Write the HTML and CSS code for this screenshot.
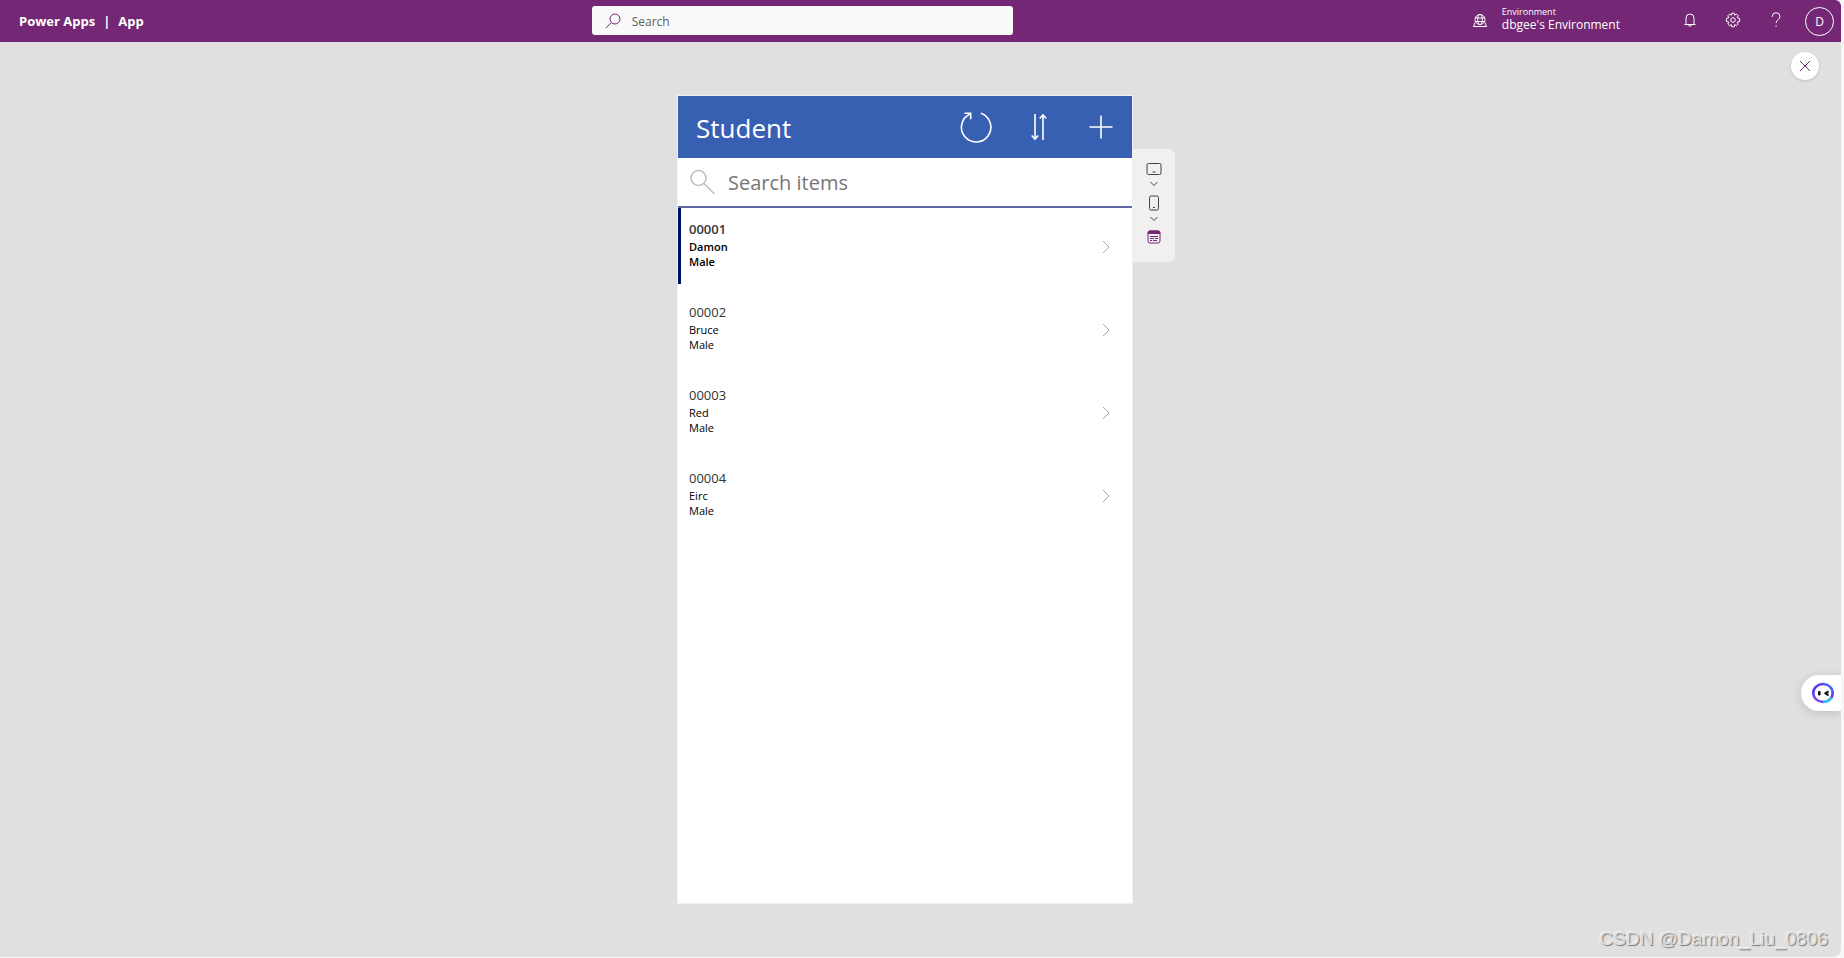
FILE: index.html
```
<!DOCTYPE html>
<html lang="en">
<head>
    <meta charset="UTF-8">
    <meta name="viewport" content="width=device-width, initial-scale=1.0">
    <title>Power Apps | App</title>
    <link rel="stylesheet" href="styles.css">
</head>
<body>
    <div class="window">
        <!-- Top bar -->
        <header class="topbar">
            <div class="brand">
                <a href="#">Power Apps</a>
                <span>|</span>
                <a href="#">App</a>
            </div>
            <div class="top-search">
                <svg width="16" height="16" viewBox="0 0 16 16"><circle cx="10" cy="6" r="5"/><path d="M6.4 9.6L.8 15"/></svg>
                <input type="text" aria-label="Search" placeholder="Search">
            </div>
            <div class="top-actions">
                <button class="environment">
                    <svg width="16" height="16" viewBox="0 0 16 16"><circle cx="8" cy="6.5" r="5"/><ellipse cx="8" cy="6.5" rx="2.3" ry="5"/><path d="M3 5h10M3 8.500h10M3 9.500L1.500 13.500h13L13 9.500"/></svg>
                    <span class="environment-text">
                        <small>Environment</small>
                        <span>dbgee's Environment</span>
                    </span>
                </button>
                <button class="icon-button" aria-label="Notifications">
                    <svg width="16" height="16" viewBox="0 0 16 16"><path d="M2.5 12.5h11M4 12.5V6a4 4 0 0 1 8 0v6.5M6.5 12.5a1.500 1.700 0 0 0 3 0"/></svg>
                </button>
                <button class="icon-button" aria-label="Settings">
                    <svg width="16" height="16" viewBox="0 0 16 16"><circle cx="8" cy="8" r="2.3"/><path d="M6.800 1.200h2.400l.5 2 1.800-1.100 1.700 1.700-1.100 1.800 2.500.8v3l-2.500.8 1.100 1.800-1.700 1.700-1.800-1.100-.5 2.200H6.800l-.5-2.200-1.800 1.100L2.800 12l1.100-1.800-2.500-.8v-3l2.500-.8-1.100-1.800 1.700-1.700 1.800 1.100z"/></svg>
                </button>
                <button class="icon-button" aria-label="Help">
                    <svg width="16" height="16" viewBox="0 0 16 16"><path d="M4.300 5V4.500a3.800 3.800 0 0 1 7.600 0c0 3-3.800 3.500-3.800 6.500M8.100 13.300v1.500"/></svg>
                </button>
                <button class="avatar">D</button>
            </div>
        </header>

        <!-- App preview -->
        <main class="stage">
            <section class="phone">
                <div class="app-header">
                    <h1>Student</h1>
                    <button aria-label="Refresh">
                        <svg width="34" height="34" viewBox="0 0 34 34"><path d="M20.800 3.300a14.700 14.700 0 1 1-10.800.6"/><path d="M4.500 3.300h6.200v6"/></svg>
                    </button>
                    <button aria-label="Sort">
                        <svg width="34" height="34" viewBox="0 0 34 34"><path d="M13 4v24M9.700 25.500L13 29l3.300-3.500M21 30V6M17.700 8.500L21 5l3.300 3.500"/></svg>
                    </button>
                    <button aria-label="New item">
                        <svg width="34" height="34" viewBox="0 0 34 34"><path d="M17 5.500v23M5.500 17h23"/></svg>
                    </button>
                </div>
                <div class="app-search">
                    <svg width="26" height="26" viewBox="0 0 26 26"><circle cx="8.500" cy="9" r="7.500"/><path d="M14 14.500l10.500 10.500"/></svg>
                    <input type="text" aria-label="Search items" placeholder="Search items">
                </div>
                <ul class="gallery">
                    <li class="selected">
                        <div>
                            <h2>00001</h2>
                            <p>Damon</p>
                            <p>Male</p>
                        </div>
                        <button aria-label="Open 00001"><svg width="8" height="14" viewBox="0 0 8 14"><path d="M1 1l6 6-6 6"/></svg></button>
                    </li>
                    <li>
                        <div>
                            <h2>00002</h2>
                            <p>Bruce</p>
                            <p>Male</p>
                        </div>
                        <button aria-label="Open 00002"><svg width="8" height="14" viewBox="0 0 8 14"><path d="M1 1l6 6-6 6"/></svg></button>
                    </li>
                    <li>
                        <div>
                            <h2>00003</h2>
                            <p>Red</p>
                            <p>Male</p>
                        </div>
                        <button aria-label="Open 00003"><svg width="8" height="14" viewBox="0 0 8 14"><path d="M1 1l6 6-6 6"/></svg></button>
                    </li>
                    <li>
                        <div>
                            <h2>00004</h2>
                            <p>Eirc</p>
                            <p>Male</p>
                        </div>
                        <button aria-label="Open 00004"><svg width="8" height="14" viewBox="0 0 8 14"><path d="M1 1l6 6-6 6"/></svg></button>
                    </li>
                </ul>
            </section>

            <!-- Device switcher -->
            <aside class="devices">
                <button aria-label="Tablet">
                    <svg width="16" height="14" viewBox="0 0 16 14"><rect x="1" y="1.500" width="14" height="11" rx="1.500"/><path d="M6.500 10h3"/></svg>
                    <svg width="10" height="6" viewBox="0 0 10 6"><path d="M1.500 1L5 4.500 8.500 1"/></svg>
                </button>
                <button aria-label="Phone">
                    <svg width="16" height="16" viewBox="0 0 16 16"><rect x="3.500" y="1" width="9" height="14" rx="1.500"/><path d="M7 12.500h2"/></svg>
                    <svg width="10" height="6" viewBox="0 0 10 6"><path d="M1.500 1L5 4.500 8.500 1"/></svg>
                </button>
                <button class="form-view" aria-label="Form view">
                    <svg width="14" height="14" viewBox="0 0 14 14"><rect x="1" y="1" width="12" height="12" rx="2"/><path class="fill" d="M1 3.500V3a2 2 0 0 1 2-2h8a2 2 0 0 1 2 2v.500z"/><path d="M3 6.500h8M3 8.500h4M8 8.500h3M3 10.500h2M6 10.500h4"/></svg>
                </button>
            </aside>
        </main>

        <button class="close" aria-label="Close">
            <svg width="12" height="12" viewBox="0 0 12 12"><path d="M1 1l10 10M11 1L1 11"/></svg>
        </button>

        <button class="assistant" aria-label="Assistant">
            <svg width="24" height="24" viewBox="0 0 24 24">
                <defs>
                    <linearGradient id="ring" x1="0" y1="1" x2="1" y2="0">
                        <stop offset="0" stop-color="#c04df0"/>
                        <stop offset=".3" stop-color="#4a3df5"/>
                        <stop offset=".7" stop-color="#5a3df5"/>
                        <stop offset="1" stop-color="#3a8df8"/>
                    </linearGradient>
                </defs>
                <ellipse cx="12" cy="12" rx="9.700" ry="9" fill="#fff" stroke="url(#ring)" stroke-width="2.600"/>
                <path d="M12 21c4 0 7-1.500 8.500-4.500" fill="none" stroke="#35c4ee" stroke-width="2.600"/>
                <rect x="7" y="10" width="2.600" height="4.500" rx="1" fill="#111" stroke="none"/>
                <path d="M17.500 10.300l-3 2 3 2" fill="none" stroke="#111" stroke-width="2"/>
            </svg>
        </button>

        <div class="watermark">CSDN @Damon_Liu_0806</div>
    </div>
</body>
</html>
```
FILE: styles.css
```
* {
    box-sizing: border-box;
}

body {
    min-height: 100vh;
    margin: 0;
    background: #f7f7f7;
    font-family: "Open Sans", "Noto Sans", sans-serif;
}

button {
    padding: 0;
    border: none;
    background: none;
    color: inherit;
    font-family: inherit;
    cursor: pointer;
}

input {
    flex: 1;
    min-width: 0;
    padding: 0;
    border: none;
    outline: none;
    background: none;
    font-family: inherit;
}

svg {
    display: block;
    flex: none;
    fill: none;
    stroke: currentColor;
}

.window {
    position: relative;
    display: flex;
    flex-direction: column;
    min-height: calc(100vh - 1px);
    margin-right: 3px;
    border-radius: 0 6px 8px 0;
    background: #e0e0e0;
    overflow: hidden;
}

/* Top bar */
.topbar {
    display: grid;
    grid-template-columns: 5fr 421px 7fr;
    align-items: center;
    height: 42px;
    background: #742774;
    color: #fff;
}

.brand {
    display: flex;
    gap: 8px;
    padding-left: 19px;
    font-size: 13px;
    font-weight: 700;
}

.brand a {
    color: inherit;
    text-decoration: none;
}

.top-search {
    display: flex;
    align-items: center;
    gap: 11px;
    height: 29px;
    margin-bottom: 1px;
    padding: 0 13px;
    border-radius: 3px;
    background: #fafafa;
    color: #742774;
}

.top-search input {
    padding-top: 1px;
    font-size: 12px;
}

.top-search input::placeholder {
    color: #605e5c;
}

.top-actions {
    display: flex;
    align-items: center;
    justify-content: flex-end;
    padding-right: 7px;
}

.environment {
    display: flex;
    align-items: center;
    gap: 14px;
    margin-right: 48px;
    text-align: left;
}

.environment-text {
    display: flex;
    flex-direction: column;
    padding-bottom: 5px;
    font-size: 12px;
    line-height: 14px;
}

.environment-text small {
    font-size: 9px;
    line-height: 13px;
}

.icon-button {
    display: flex;
    justify-content: center;
    width: 43px;
    padding-bottom: 2px;
}

.avatar {
    width: 29px;
    height: 29px;
    margin-left: 8px;
    border: 1px solid #fff;
    border-radius: 50%;
    font-size: 12px;
}

/* App preview */
.stage {
    flex: 1;
    display: flex;
    justify-content: center;
    align-items: stretch;
    padding: 53px 0 53px 11px;
}

.phone {
    width: 456px;
    border: 1px solid #f0f0f0;
    background: #fff;
}

.app-header {
    display: flex;
    align-items: center;
    gap: 28px;
    height: 62px;
    padding: 0 14px 0 18px;
    background: #3860b2;
    color: #fff;
    stroke-width: 1.6;
}

.app-header h1 {
    flex: 1;
    margin: 0;
    padding-top: 2px;
    font-size: 26px;
    font-weight: 400;
}

.app-search {
    display: flex;
    align-items: center;
    gap: 12px;
    height: 50px;
    padding: 0 12px;
    border-bottom: 2px solid #5f67a5;
    color: #bfbfbf;
    stroke-width: 1.6;
}

.app-search input {
    font-size: 20px;
    color: #333;
}

.app-search input::placeholder {
    color: #767676;
}

.gallery {
    margin: 0;
    padding: 0;
    list-style: none;
}

.gallery li {
    display: flex;
    justify-content: space-between;
    align-items: center;
    height: 76px;
    margin-bottom: 7px;
    padding: 0 22px 0 8px;
    border-left: 3px solid transparent;
}

.gallery li.selected {
    border-color: #00126b;
    font-weight: 600;
}

.gallery div {
    padding-bottom: 4px;
}

.gallery h2 {
    margin: 0;
    font-size: 13px;
    font-weight: inherit;
    line-height: 20px;
    color: #333;
}

.gallery p {
    margin: 0;
    font-size: 11px;
    line-height: 15px;
    color: #000;
}

.gallery button {
    padding-top: 2px;
    color: #a6a6a6;
}

/* Device switcher */
.devices {
    display: flex;
    flex-direction: column;
    align-self: flex-start;
    align-items: center;
    gap: 8px;
    width: 42px;
    margin-top: 54px;
    padding: 13px 0 18px;
    border-radius: 0 6px 6px 0;
    background: #f0f0f0;
    color: #444;
}

.devices button {
    display: flex;
    flex-direction: column;
    align-items: center;
    gap: 5px;
}

.devices .form-view {
    color: #742774;
}

.fill {
    fill: currentColor;
}

/* Floating controls */
.close {
    position: absolute;
    top: 52px;
    right: 22px;
    display: flex;
    justify-content: center;
    align-items: center;
    width: 28px;
    height: 28px;
    border-radius: 50%;
    background: #fff;
    box-shadow: 0 1px 3px rgba(0, 0, 0, 0.15);
    color: #742774;
}

.assistant {
    position: absolute;
    right: 0;
    bottom: 246px;
    display: flex;
    align-items: center;
    width: 40px;
    height: 36px;
    padding-left: 10px;
    border-radius: 18px 0 0 18px;
    background: #fff;
    box-shadow: 0 2px 10px rgba(0, 0, 0, 0.15);
}

.watermark {
    position: absolute;
    right: 13px;
    bottom: 7px;
    font-family: "Liberation Sans", Arial, sans-serif;
    font-size: 19px;
    color: #dcdcdc;
    text-shadow: 1px 1px 1px #777, -1px -1px 1px #f4f4f4;
}
```
